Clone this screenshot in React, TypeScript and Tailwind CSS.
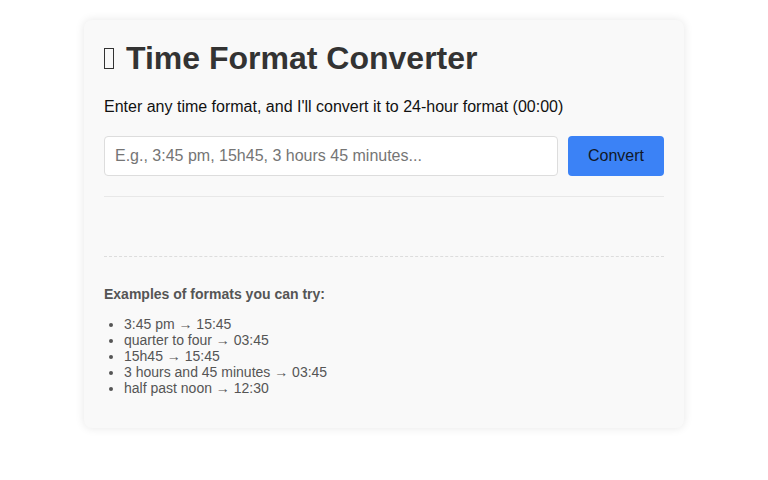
import React, { useState } from 'react';

const examples = [
  '3:45 pm → 15:45',
  'quarter to four → 03:45',
  '15h45 → 15:45',
  '3 hours and 45 minutes → 03:45',
  'half past noon → 12:30',
];

export default function App() {
  const [value, setValue] = useState('');

  return (
    <div className="min-h-screen bg-white pt-5 font-['Liberation_Sans',Arial,sans-serif]">
      <div className="mx-auto w-[600px] rounded-lg bg-[#f9f9f9] p-5 shadow-[0_0_10px_rgba(0,0,0,0.1)]">
        <h1 className="flex items-center text-[32px] leading-[37px] font-bold text-[#333]">
          {/* missing-glyph box for the clock emoji */}
          <span className="mr-[12px] inline-block h-[21px] w-[10px] border border-[#333]"></span>
          Time Format Converter
        </h1>
        <p className="mt-[21px] text-base leading-[18px] text-[#111]">
          Enter any time format, and I'll convert it to 24-hour format (00:00)
        </p>
        <div className="mt-5 flex gap-2.5">
          <input
            value={value}
            onChange={e => setValue(e.target.value)}
            placeholder="E.g., 3:45 pm, 15h45, 3 hours 45 minutes..."
            className="h-10 flex-1 rounded border border-[#ddd] bg-white px-2.5 text-base text-[#333] placeholder:text-[#757575] outline-none"
          />
          <button className="h-10 w-24 rounded bg-[#3b82f6] text-base text-[#111827]">Convert</button>
        </div>
        <div className="mt-5 h-[60px] border-t border-[#e8e8e8]"></div>
        <div className="border-t border-dashed border-[#ddd]"></div>
        <div className="mt-[29px] text-sm leading-4 font-bold text-[#555]">Examples of formats you can try:</div>
        <ul className="mt-3.5 mb-3 list-disc pl-5 text-sm leading-4 text-[#555]">
          {examples.map(ex => (
            <li key={ex}>{ex}</li>
          ))}
        </ul>
      </div>
    </div>
  );
}
